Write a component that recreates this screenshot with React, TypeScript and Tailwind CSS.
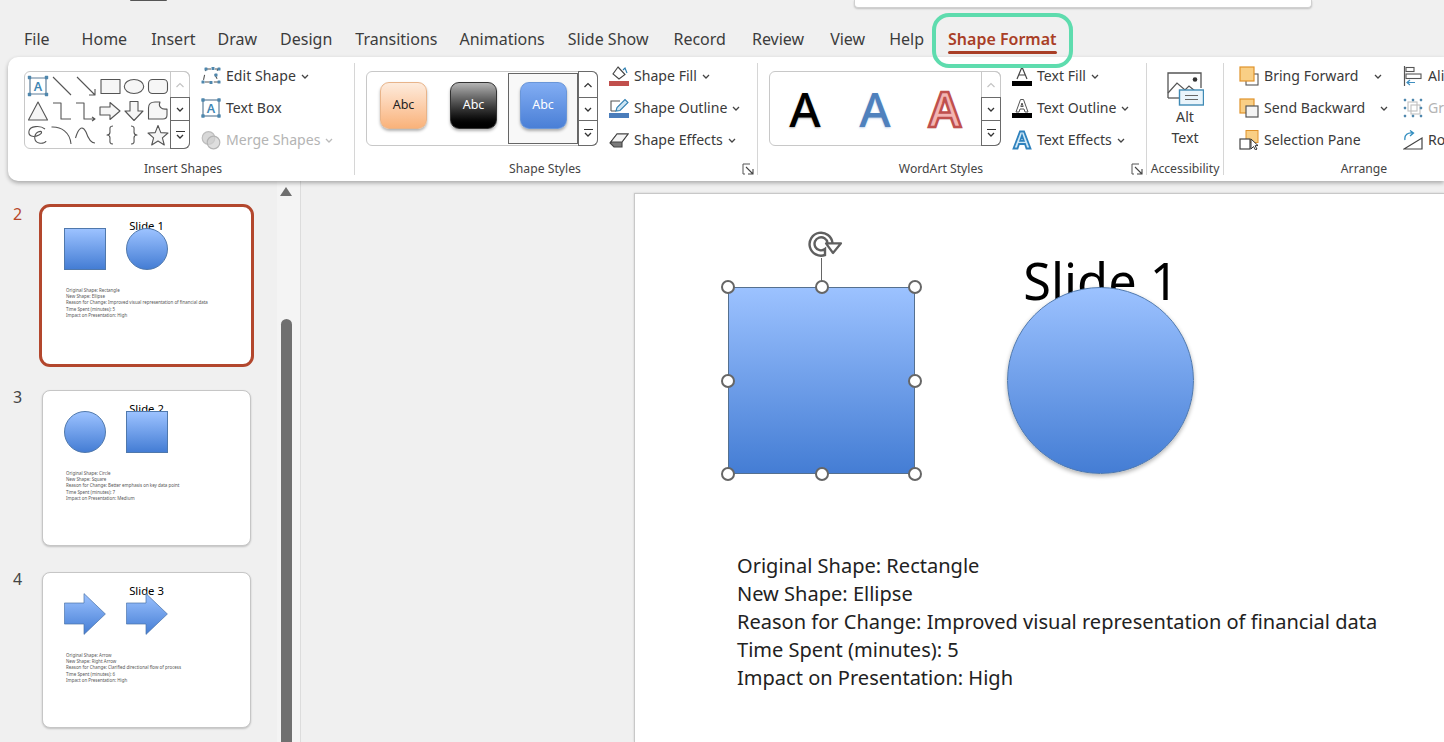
import React, { useId } from 'react';

const tabs = [
  { label: 'Home', cls: 'ml-[32px]' },
  { label: 'Insert', cls: 'ml-[24px]' },
  { label: 'Draw', cls: 'ml-[22px]' },
  { label: 'Design', cls: 'ml-[23px]' },
  { label: 'Transitions', cls: 'ml-[23px]' },
  { label: 'Animations', cls: 'ml-[22px]' },
  { label: 'Slide Show', cls: 'ml-[23px]' },
  { label: 'Record', cls: 'ml-[25px]' },
  { label: 'Review', cls: 'ml-[26px]' },
  { label: 'View', cls: 'ml-[26px]' },
  { label: 'Help', cls: 'ml-[24px]' },
];

function Chevron({ color = '#444' }: { color?: string }) {
  return (
    <svg width="8" height="5" viewBox="0 0 8 5" className="shrink-0">
      <path d="M1 1 L4 4 L7 1" fill="none" stroke={color} strokeWidth="1.3" />
    </svg>
  );
}

function Launcher() {
  return (
    <svg width="14" height="14" viewBox="0 0 14 14" className="shrink-0">
      <path d="M2 12 V2 H9 M2 12 H4" fill="none" stroke="#555" strokeWidth="1" />
      <path d="M5 5 L12 12 M12 7 V12 H7" fill="none" stroke="#444" strokeWidth="1.1" />
    </svg>
  );
}

function ScrollButtons({ upDisabled, short }: { upDisabled?: boolean; short?: boolean }) {
  return (
    <div className="flex w-[20px] shrink-0 flex-col">
      <div className={`flex h-[26px] items-center justify-center rounded-tr-md border ${upDisabled ? 'border-[#c8c8c8] border-b-0' : 'border-[#6a6a6a] border-b-0'}`}>
        <svg width="10" height="6" viewBox="0 0 10 6">
          <path d="M1.5 5 L5 1.5 L8.5 5" fill="none" stroke={upDisabled ? '#c4c4c4' : '#333'} strokeWidth="1.2" />
        </svg>
      </div>
      <div className="flex h-[24px] items-center justify-center border border-[#6a6a6a]">
        <Chevron color="#333" />
      </div>
      <div className={`flex flex-col items-center justify-center gap-[2px] rounded-br-md border border-t-0 border-[#6a6a6a] ${short ? 'h-[25px]' : 'h-[28px]'}`}>
        <div className="h-px w-[9px] bg-[#333]" />
        <Chevron color="#333" />
      </div>
    </div>
  );
}

function RowButton({ icon, label, chevron = true, disabled, chevronGap }: { icon: React.ReactNode; label: string; chevron?: boolean; disabled?: boolean; chevronGap?: string }) {
  return (
    <div className="flex h-[32px] items-center whitespace-nowrap">
      <div className="flex h-[22px] w-[20px] shrink-0 items-center justify-center">{icon}</div>
      <span className={`ml-[5px] text-[14.1px] ${disabled ? 'text-[#b4b4b4]' : 'text-[#3a3a3a]'}`}>{label}</span>
      {chevron && (
        <span className={chevronGap ?? 'ml-[5px]'}>
          <Chevron color={disabled ? '#bbb' : '#444'} />
        </span>
      )}
    </div>
  );
}

function GroupLabel({ text, launcher }: { text: string; launcher?: boolean }) {
  return (
    <div className="flex h-[18px] items-center">
      <div className="flex-1 whitespace-nowrap text-center text-[12.2px] text-[#444]">{text}</div>
      {launcher && (
        <div className="ml-[6px] mr-[2px]">
          <Launcher />
        </div>
      )}
    </div>
  );
}

const Sg = ({ children }: { children: React.ReactNode }) => (
  <svg width="24" height="24" viewBox="0 0 24 24" fill="#f6f6f6" stroke="#555" strokeWidth="1.1" strokeLinejoin="round">
    {children}
  </svg>
);

function Handles({ pts, size = 3.4 }: { pts: number[][]; size?: number }) {
  return (
    <>
      {pts.map(([x, y], i) => (
        <rect key={i} x={x - size / 2} y={y - size / 2} width={size} height={size} fill="#4f87ad" stroke="none" rx="0.6" />
      ))}
    </>
  );
}

const galleryShapes: React.ReactNode[] = [
  <Sg>
    <rect x="4" y="4" width="16" height="16" fill="#fff" stroke="#5f7f99" strokeWidth="1.2" />
    <Handles pts={[[3.5, 3.5], [20.5, 3.5], [3.5, 20.5], [20.5, 20.5]]} />
    <text x="12" y="17" textAnchor="middle" fontSize="12.5" fontWeight="600" fill="#3f87b5" stroke="none" fontFamily="Noto Sans, sans-serif">A</text>
  </Sg>,
  <Sg><path d="M3 3 L21 21" fill="none" /></Sg>,
  <Sg><path d="M3 3 L21 21 M21 15 V21 H15" fill="none" /></Sg>,
  <Sg><rect x="3" y="5.5" width="19" height="14" /></Sg>,
  <Sg><ellipse cx="12" cy="12.5" rx="9.7" ry="7" /></Sg>,
  <Sg><rect x="2.5" y="5.5" width="19" height="14" rx="4" /></Sg>,
  <Sg><path d="M12 3 L21.5 21 H2.5 Z" /></Sg>,
  <Sg><path d="M3 4 H11 V20 H21" fill="none" /></Sg>,
  <Sg><path d="M2 4 H10 V20 H20 M18 18 L21 20 L18 22" fill="none" /></Sg>,
  <Sg><path d="M2 8 H12 V3.5 L22 12 L12 20.5 V16 H2 Z" /></Sg>,
  <Sg><path d="M8 2.5 H16 V12 H21 L12 21.5 L3 12 H8 Z" /></Sg>,
  <Sg><path d="M2.5 20 V9 C2.5 5 5 3 9 3 H14 C12 7 15 11 21 10 V16 C21 19 19 20 17 20 Z" /></Sg>,
  <Sg><path d="M19 6 C14 2 4 3 3 8 C2 13 7 15 13 12 C17 10 16 7 12 9 C7 12 8 19 13 20 C17 21 20 19 20 18" fill="none" /></Sg>,
  <Sg><path d="M1.5 4 C11 3.5 20 9 21 21" fill="none" /></Sg>,
  <Sg><path d="M1.5 15 C5 3 9 3 12 9 C14 15 17 20 21 20" fill="none" /></Sg>,
  <Sg><path d="M15 3 C11 3 12 6 12 9 C12 11 11 12 9 12 C11 12 12 13 12 15 C12 18 11 21 15 21" fill="none" /></Sg>,
  <Sg><path d="M9 3 C13 3 12 6 12 9 C12 11 13 12 15 12 C13 12 12 13 12 15 C12 18 13 21 9 21" fill="none" /></Sg>,
  <Sg><path d="M12 2.5 L14.8 9.6 L22 10 L16.4 14.8 L18.3 22 L12 18 L5.7 22 L7.6 14.8 L2 10 L9.2 9.6 Z" /></Sg>,
];

const Ic = ({ children, w = 20, h = 20 }: { children: React.ReactNode; w?: number; h?: number }) => (
  <svg width={w} height={h} viewBox={`0 0 ${w} ${h}`} className="shrink-0" fill="none">
    {children}
  </svg>
);

const icons = {
  editShape: (
    <Ic>
      <path d="M5 3 H17 L14 9 L18 16 H2 Z" stroke="#555" strokeWidth="1.1" strokeDasharray="5 4" />
      <Handles pts={[[5, 3], [12, 2.5], [18, 3], [15, 9], [2, 16], [18, 16], [10, 16.5]]} size={3} />
    </Ic>
  ),
  textBox: (
    <Ic>
      <rect x="2" y="2" width="16" height="16" fill="#fff" stroke="#5f7f99" strokeWidth="1.2" />
      <Handles pts={[[2, 2], [18, 2], [2, 18], [18, 18]]} />
      <text x="10" y="15" textAnchor="middle" fontSize="12.5" fontWeight="600" fill="#3f87b5" fontFamily="Noto Sans, sans-serif">A</text>
    </Ic>
  ),
  merge: (
    <Ic>
      <circle cx="7.5" cy="8" r="6.3" fill="#d8d8d8" stroke="#bdbdbd" strokeWidth="1.2" />
      <circle cx="12.5" cy="12.5" r="6.3" fill="#d0d0d0" fillOpacity="0.7" stroke="#b4b4b4" strokeWidth="1.2" />
    </Ic>
  ),
  shapeFill: (
    <Ic>
      <path d="M9 1 L16 8.5 L10 13 L4 8 Z" fill="#fff" stroke="#444" strokeWidth="1.1" />
      <path d="M14 4 L16 2 L18 7" stroke="#2f7fb0" strokeWidth="1.2" />
      <rect x="0" y="15" width="20" height="5" fill="#c14f4c" />
    </Ic>
  ),
  shapeOutline: (
    <Ic>
      <path d="M2 13 V3 H11 M2 13 H7" stroke="#555" strokeWidth="1.1" />
      <path d="M7 13 L8 9.5 L16 1.5 L19 4.5 L11 12.5 Z" fill="#cfe6f4" stroke="#2f7fb0" strokeWidth="1.1" />
      <rect x="0" y="15" width="20" height="5" fill="#4a7dbb" />
    </Ic>
  ),
  shapeEffects: (
    <Ic>
      <path d="M1 13 L8 4 H19 L13 12 V17 H5 Z" fill="#7a7a7a" stroke="#444" strokeWidth="1.1" />
      <path d="M1 13 L8 4 H19 L13 12 H3 Z" fill="#f4f4f4" stroke="#444" strokeWidth="1.1" />
    </Ic>
  ),
  textFill: (
    <Ic>
      <path d="M5 13 L10 1 L15 13 M6.8 9 H13.2" stroke="#444" strokeWidth="1.2" />
      <rect x="0" y="15" width="20" height="5" fill="#000" />
    </Ic>
  ),
  textOutline: (
    <Ic>
      <path d="M4 14 L8.5 1.5 H11.5 L16 14 H13 L12 11 H8 L7 14 Z M8.8 8.5 H11.2 L10 5 Z" fill="#fff" stroke="#555" strokeWidth="1" />
      <rect x="0" y="15" width="20" height="5" fill="#000" />
    </Ic>
  ),
  textEffects: (
    <Ic>
      <path d="M1.5 18.5 L8 1.5 H12 L18.5 18.5 H14.5 L13 14 H7 L5.5 18.5 Z M8.2 10.8 H11.8 L10 5.5 Z" fill="#cfe8f7" stroke="#2f82bd" strokeWidth="1.8" />
    </Ic>
  ),
  bringForward: (
    <Ic>
      <rect x="7" y="8" width="12" height="11" fill="#fff" stroke="#555" strokeWidth="1.1" />
      <rect x="1" y="1" width="14" height="14" fill="#f9cf85" stroke="#e0932c" strokeWidth="1.2" />
    </Ic>
  ),
  sendBackward: (
    <Ic>
      <rect x="1" y="1" width="14" height="14" fill="#f9cf85" stroke="#e0932c" strokeWidth="1.2" />
      <rect x="7" y="8" width="12" height="11" fill="#f4f4f4" stroke="#555" strokeWidth="1.2" />
    </Ic>
  ),
  selectionPane: (
    <Ic>
      <rect x="7" y="0.5" width="12" height="12" fill="#f9cf85" stroke="#e0932c" strokeWidth="1" />
      <rect x="1" y="9" width="10" height="10" fill="#fff" stroke="#444" strokeWidth="1.2" />
      <path d="M12 9 L12 19 L14.5 16.5 L16.5 20 L18 19 L16 15.8 L19 15.5 Z" fill="#fff" stroke="#333" strokeWidth="1" />
    </Ic>
  ),
  align: (
    <Ic>
      <path d="M1.5 0 V20" stroke="#555" strokeWidth="1.2" />
      <rect x="3" y="1.5" width="8" height="4" stroke="#555" strokeWidth="1.1" />
      <rect x="3" y="8" width="15" height="4.5" stroke="#555" strokeWidth="1.1" />
      <path d="M12 16.5 H4 M7 14 L4 16.5 L7 19" stroke="#3f8fc0" strokeWidth="1.2" />
    </Ic>
  ),
  group: (
    <Ic>
      <rect x="5" y="4" width="9" height="9" stroke="#c0c0c0" strokeWidth="1.1" />
      <rect x="8" y="7" width="9" height="9" stroke="#c0c0c0" strokeWidth="1.1" />
      <Handles pts={[[2, 2], [18, 2], [2, 18], [18, 18], [10, 2], [2, 10], [18, 10], [10, 18]]} size={2.4} />
    </Ic>
  ),
  rotate: (
    <Ic>
      <path d="M1 19 L19 8 V19 Z" stroke="#444" strokeWidth="1.2" />
      <path d="M2 10 C1 5 5 2 10 3 M7 0.5 L10.5 3 L7 6" stroke="#2f8cbf" strokeWidth="1.3" />
    </Ic>
  ),
};

function AltTextIcon() {
  return (
    <svg width="38" height="36" viewBox="0 0 38 36" fill="none">
      <path d="M2 27 V2 H35 V17" stroke="#555" strokeWidth="1.3" />
      <path d="M2 27 H14" stroke="#555" strokeWidth="1.3" />
      <path d="M2 22 L11 12 L19 19 L23 15 L29 20" stroke="#555" strokeWidth="1.2" />
      <circle cx="29" cy="8.5" r="2.3" fill="#333" />
      <rect x="13.5" y="19" width="24" height="15" fill="#e9f4fb" stroke="#3f8ab5" strokeWidth="1.4" />
      <path d="M19 24.5 H32 M19 28.5 H32" stroke="#666" strokeWidth="1.1" />
    </svg>
  );
}

function Swatch({ cls, textCls }: { cls: string; textCls: string }) {
  return (
    <div className={`flex h-[47px] w-[47px] shrink-0 items-center justify-center rounded-[9px] border shadow-[0_2px_3px_rgba(0,0,0,0.3)] text-[12.5px] ${cls} ${textCls}`}>
      Abc
    </div>
  );
}

function Arrow({ w, h }: { w: number; h: number }) {
  const id = useId();
  return (
    <svg width={w} height={h} viewBox="0 0 42 42">
      <defs>
        <linearGradient id={id} x1="0" y1="0" x2="0" y2="1">
          <stop offset="0" stopColor="#9cc2ff" />
          <stop offset="1" stopColor="#447dd4" />
        </linearGradient>
      </defs>
      <polygon points="0.4,10 20,10 20,0.6 41.4,21 20,41.4 20,31 0.4,31" fill={`url(#${id})`} stroke="#4a72a8" strokeWidth="0.7" />
    </svg>
  );
}

const fill = 'bg-linear-to-b from-[#9cc2ff] to-[#447dd4] border border-[#4f78ac]';

function MiniShape({ kind }: { kind: 'square' | 'circle' | 'arrow' }) {
  if (kind === 'arrow') return <Arrow w={42} h={42} />;
  return <div className={`h-[42px] w-[42px] ${fill} ${kind === 'circle' ? 'rounded-full' : ''}`} />;
}

const thumbs = [
  {
    num: 2,
    selected: true,
    rowCls: 'h-[183px]',
    title: 'Slide 1',
    shapes: ['square', 'circle'] as const,
    lines: ['Original Shape: Rectangle', 'New Shape: Ellipse', 'Reason for Change: Improved visual representation of financial data', 'Time Spent (minutes): 5', 'Impact on Presentation: High'],
  },
  {
    num: 3,
    selected: false,
    rowCls: 'h-[182px]',
    title: 'Slide 2',
    shapes: ['circle', 'square'] as const,
    lines: ['Original Shape: Circle', 'New Shape: Square', 'Reason for Change: Better emphasis on key data point', 'Time Spent (minutes): 7', 'Impact on Presentation: Medium'],
  },
  {
    num: 4,
    selected: false,
    rowCls: 'h-[182px]',
    title: 'Slide 3',
    shapes: ['arrow', 'arrow'] as const,
    lines: ['Original Shape: Arrow', 'New Shape: Right Arrow', 'Reason for Change: Clarified directional flow of process', 'Time Spent (minutes): 6', 'Impact on Presentation: High'],
  },
];

const handlePos = [
  '-left-[8px] -top-[8px]',
  'left-[86px] -top-[8px]',
  '-right-[8px] -top-[8px]',
  '-left-[8px] top-[86px]',
  '-right-[8px] top-[86px]',
  '-left-[8px] -bottom-[8px]',
  'left-[86px] -bottom-[8px]',
  '-right-[8px] -bottom-[8px]',
];

export default function App() {
  return (
    <div className="flex h-[742px] w-[1444px] flex-col overflow-hidden bg-[#f0f0f0] font-['Noto_Sans',sans-serif] text-[#333]">
      {/* title bar leftovers */}
      <div className="flex h-[8px] shrink-0 items-start">
        <div className="ml-[130px] h-px w-[37px] rounded-b bg-[#555]" />
        <div className="ml-[687px] h-[8px] w-[458px] rounded-b-[4px] border-x border-b border-[#d0d0d0] bg-white shadow-[0_1px_2px_rgba(0,0,0,0.2)]" />
      </div>

      {/* tabs */}
      <div className="flex h-[49px] shrink-0 items-center pl-[24px] pt-[13px] text-[16px] text-[#3c3c3c]">
        <span>File</span>
        {tabs.map((t) => (
          <span key={t.label} className={t.cls}>{t.label}</span>
        ))}
        <span className="relative z-20 ml-[24px] font-semibold text-[#a93e26]">
          Shape Format
          <span className="absolute inset-x-0 -bottom-[3px] h-[3px] rounded-sm bg-[#a93e26]" />
          <span className="absolute -bottom-[17px] -left-[16px] -right-[16px] -top-[14px] rounded-[17px] border-4 border-[#5edcae]" />
        </span>
      </div>

      {/* ribbon */}
      <div className="relative z-10 ml-[8px] flex h-[124px] shrink-0 rounded-l-[10px] bg-white shadow-[0_2px_4px_rgba(0,0,0,0.3)]">
        <div className="flex w-[346px] shrink-0 flex-col">
          <div className="flex h-[103px] pl-[16px]">
            <div className="mt-[14px] flex h-[78px] w-[166px] rounded-md border border-[#c8c8c8]">
              <div className="grid flex-1 grid-cols-6 grid-rows-3 pl-[1px] pt-[2px]">
                {galleryShapes.map((s, i) => (
                  <div key={i} className="h-[24px] w-[24px]">{s}</div>
                ))}
              </div>
              <div className="-my-px -mr-px">
                <ScrollButtons upDisabled />
              </div>
            </div>
            <div className="ml-[11px] pt-[3px]">
              <RowButton icon={icons.editShape} label="Edit Shape" />
              <RowButton icon={icons.textBox} label="Text Box" chevron={false} />
              <RowButton icon={icons.merge} label="Merge Shapes" disabled />
            </div>
          </div>
          <div className="pl-[4px]">
            <GroupLabel text="Insert Shapes" />
          </div>
        </div>
        <div className="my-[6px] w-px shrink-0 bg-[#d6d6d6]" />

        <div className="flex w-[402px] shrink-0 flex-col">
          <div className="flex h-[103px] pl-[11px]">
            <div className="mt-[14px] flex h-[75px] w-[232px] rounded-md border border-[#c8c8c8]">
              <div className="flex flex-1 items-start pl-[13px]">
                <div className="mt-[10px]">
                  <Swatch cls="bg-linear-to-b from-[#fdebdc] to-[#f9b27a] border-[#e8b48a]" textCls="text-[#222]" />
                </div>
                <div className="ml-[23px] mt-[10px]">
                  <Swatch cls="bg-linear-to-b from-[#b5b5b5] to-[#000] border-[#333]" textCls="text-white" />
                </div>
                <div className="ml-[11px] mt-[1px] flex h-[71px] w-[70px] shrink-0 justify-center border border-[#666] bg-[#f8f8f8] pt-[8px]">
                  <Swatch cls="bg-linear-to-b from-[#82adf3] to-[#4a7fd6] border-[#6a96d8]" textCls="text-white" />
                </div>
              </div>
              <div className="-my-px -mr-px">
                <ScrollButtons short />
              </div>
            </div>
            <div className="ml-[11px] pt-[3px]">
              <RowButton icon={icons.shapeFill} label="Shape Fill" />
              <RowButton icon={icons.shapeOutline} label="Shape Outline" />
              <RowButton icon={icons.shapeEffects} label="Shape Effects" />
            </div>
          </div>
          <GroupLabel text="Shape Styles" launcher />
        </div>
        <div className="my-[6px] w-px shrink-0 bg-[#d6d6d6]" />

        <div className="flex w-[388px] shrink-0 flex-col">
          <div className="flex h-[103px] pl-[11px]">
            <div className="mt-[14px] flex h-[75px] w-[232px] rounded-md border border-[#c8c8c8]">
              <div className="flex flex-1 items-center text-center text-[48px] font-medium leading-none">
                <span className="w-[70px] text-black [text-shadow:0_1px_2px_rgba(0,0,0,0.3)]">A</span>
                <span className="w-[70px] text-[#4f81bd] [text-shadow:0_1px_2px_rgba(79,129,189,0.35)]">A</span>
                <span className="w-[70px] font-semibold text-[#f3b5b3] [-webkit-text-stroke:2.5px_#c0504d] [text-shadow:0_1px_2px_rgba(0,0,0,0.2)]">A</span>
              </div>
              <div className="-my-px -mr-px">
                <ScrollButtons upDisabled short />
              </div>
            </div>
            <div className="ml-[11px] pt-[3px]">
              <RowButton icon={icons.textFill} label="Text Fill" />
              <RowButton icon={icons.textOutline} label="Text Outline" />
              <RowButton icon={icons.textEffects} label="Text Effects" />
            </div>
          </div>
          <GroupLabel text="WordArt Styles" launcher />
        </div>
        <div className="my-[6px] w-px shrink-0 bg-[#d6d6d6]" />

        <div className="flex w-[76px] shrink-0 flex-col">
          <div className="flex h-[103px] flex-col items-center pt-[14px] text-[14.2px] leading-[21px] text-[#3a3a3a]">
            <AltTextIcon />
            <span className="-mt-[1px]">Alt</span>
            <span>Text</span>
          </div>
          <GroupLabel text="Accessibility" />
        </div>
        <div className="my-[6px] w-px shrink-0 bg-[#d6d6d6]" />

        <div className="flex w-[280px] shrink-0 flex-col">
          <div className="flex h-[103px] pl-[15px] pt-[3px]">
            <div className="w-[164px] shrink-0">
              <RowButton icon={icons.bringForward} label="Bring Forward" chevronGap="ml-[15px]" />
              <RowButton icon={icons.sendBackward} label="Send Backward" chevronGap="ml-[15px]" />
              <RowButton icon={icons.selectionPane} label="Selection Pane" chevron={false} />
            </div>
            <div>
              <RowButton icon={icons.align} label="Align" chevron={false} />
              <RowButton icon={icons.group} label="Group" chevron={false} disabled />
              <RowButton icon={icons.rotate} label="Rotate" chevron={false} />
            </div>
          </div>
          <GroupLabel text="Arrange" />
        </div>
      </div>

      {/* lower area */}
      <div className="flex min-h-0 flex-1">
        <div className="w-[277px] shrink-0 pl-[13px] pt-[26px]">
          {thumbs.map((t) => (
            <div key={t.num} className={`flex items-start ${t.rowCls}`}>
              <div className={`w-[29px] text-[16px] leading-[14px] ${t.selected ? 'text-[#b7472a]' : 'text-[#444]'}`}>{t.num}</div>
              <div
                className={`relative w-[209px] shrink-0 rounded-[8px] border bg-white ${
                  t.selected ? 'h-[157px] border-transparent outline-[3px] outline-[#b3472d]' : 'h-[156px] border-[#c6c6c6] shadow-[0_1px_2px_rgba(0,0,0,0.2)]'
                }`}
              >
                <div className="absolute inset-x-0 top-[11px] text-center text-[11.3px] leading-[14px] text-black">{t.title}</div>
                <div className="absolute left-[21px] top-[20px]"><MiniShape kind={t.shapes[0]} /></div>
                <div className="absolute left-[83px] top-[20px]"><MiniShape kind={t.shapes[1]} /></div>
                <div className="absolute left-[23px] top-[79px] whitespace-nowrap text-[4.45px] leading-[6.2px] text-[#555]">
                  {t.lines.map((l) => (
                    <div key={l}>{l}</div>
                  ))}
                </div>
              </div>
            </div>
          ))}
        </div>

        {/* scrollbar */}
        <div className="flex w-[23px] shrink-0 flex-col items-start bg-[#f4f4f4]">
          <div className="ml-[3px] mt-[6px] h-0 w-0 border-x-[6px] border-b-[9px] border-x-transparent border-b-[#6f6f6f]" />
          <div className="ml-[4px] mt-[123px] w-[11px] flex-1 rounded-t-[6px] bg-[#707070]" />
        </div>
        <div className="w-px shrink-0 bg-[#dcdcdc]" />

        {/* canvas */}
        <div className="min-w-0 flex-1 pl-[333px] pt-[12px]">
          <div className="relative h-[549px] w-[810px] border-l border-t border-[#c8c8c8] bg-white shadow-[0_0_2px_rgba(0,0,0,0.15)]">
            <div className="absolute left-[316px] top-[47px] w-[300px] text-center text-[50.5px] leading-[80px] text-black">Slide 1</div>

            <div className={`absolute left-[372px] top-[93px] h-[187px] w-[187px] rounded-full shadow-[0_2px_4px_rgba(0,0,0,0.3)] ${fill}`} />

            <div className={`absolute left-[93px] top-[93px] h-[187px] w-[187px] border-[#55708f] ${fill}`}>
              {handlePos.map((p) => (
                <div key={p} className={`absolute h-[14px] w-[14px] rounded-full border-[2.5px] border-[#666] bg-white ${p}`} />
              ))}
              <div className="absolute -top-[30px] left-[92px] h-[23px] w-px bg-[#666]" />
              <svg width="36" height="30" viewBox="0 0 36 30" fill="none" className="absolute -top-[58px] left-[79px]">
                <path d="M24.5 13 A11.5 11.5 0 1 0 17 25 V19 A6.5 6.5 0 1 1 19.5 13" stroke="#5f5f5f" strokeWidth="2.4" />
                <path d="M18 13.3 H33 L25 23 Z" fill="#fff" stroke="#5f5f5f" strokeWidth="2.2" strokeLinejoin="round" />
              </svg>
            </div>

            <div className="absolute left-[102px] top-[358px] whitespace-nowrap text-[20.05px] leading-[28px] text-[#222]">
              <div>Original Shape: Rectangle</div>
              <div>New Shape: Ellipse</div>
              <div>Reason for Change: Improved visual representation of financial data</div>
              <div>Time Spent (minutes): 5</div>
              <div>Impact on Presentation: High</div>
            </div>
          </div>
        </div>
      </div>
    </div>
  );
}
